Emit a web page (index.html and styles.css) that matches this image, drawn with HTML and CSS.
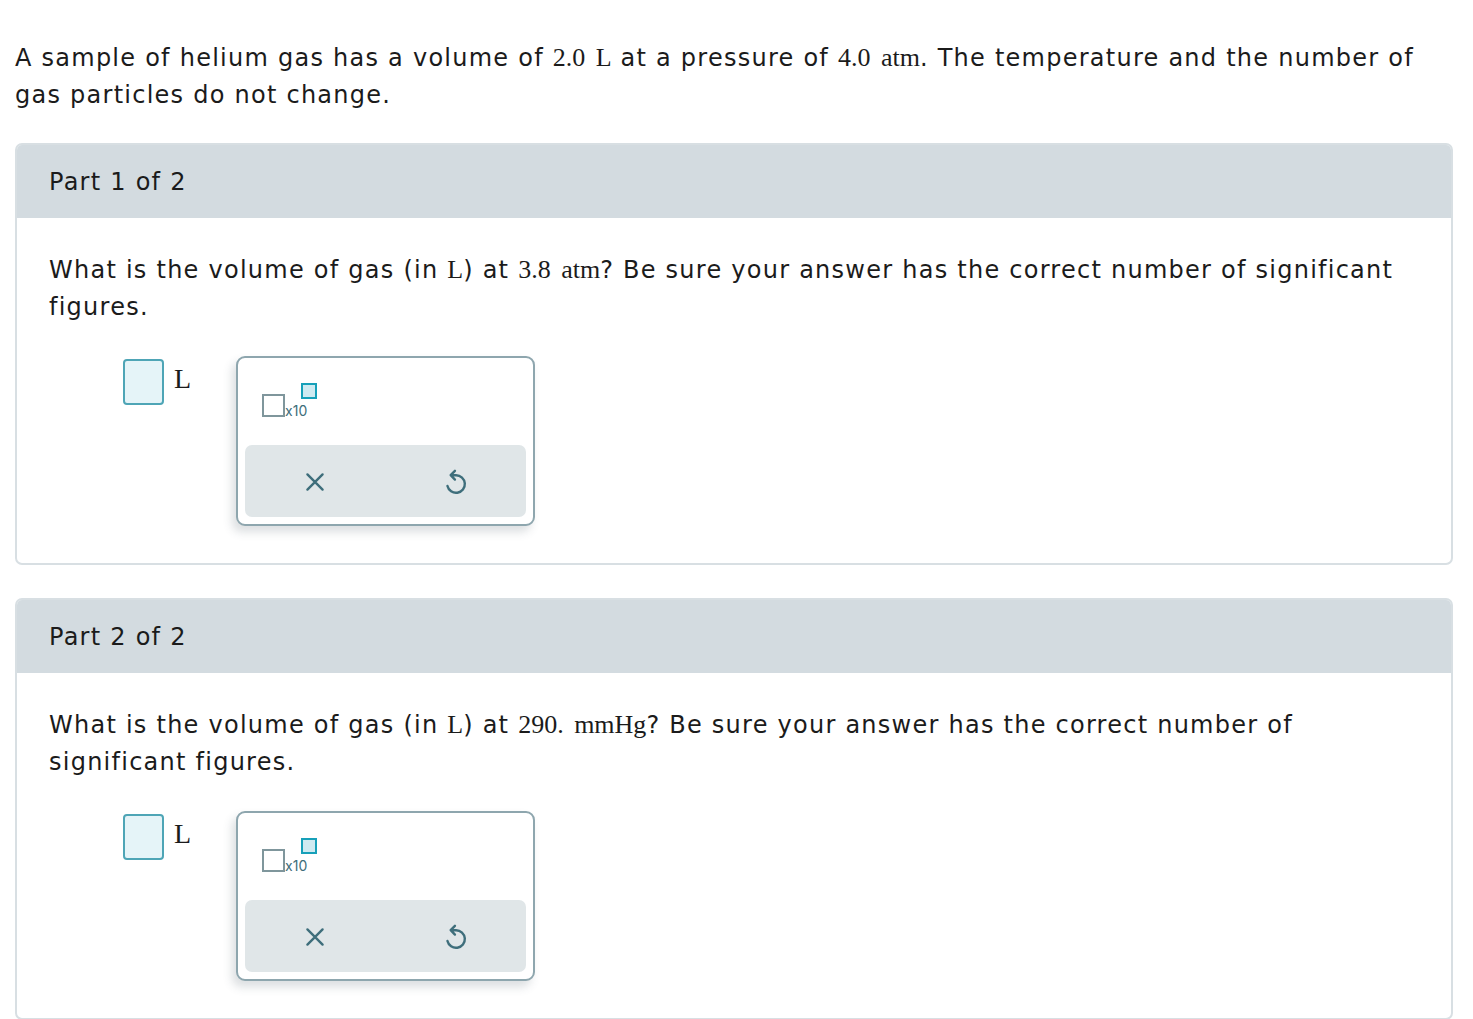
FILE: index.html
```html
<!DOCTYPE html>
<html>
<head>
<meta charset="utf-8">
<link rel="stylesheet" href="styles.css">
</head>
<body>
<div class="page">
  <p class="intro">A sample of helium gas has a volume of <span class="m">2.0&nbsp;L</span> at a pressure of <span class="m">4.0&nbsp;atm</span>. The temperature and the number of gas particles do not change.</p>

  <section class="card">
    <div class="card-head">Part 1 of 2</div>
    <div class="card-body">
      <p class="q">What is the volume of gas (in <span class="m">L</span>) at <span class="m">3.8&nbsp;atm</span>? Be sure your answer has the correct number of significant figures.</p>
      <div class="answer">
        <div class="field"></div>
        <span class="unit">L</span>
        <div class="pad">
          <div class="sci">
            <span class="box-gray"></span><span class="x10">x10</span><span class="box-sup"></span>
          </div>
          <div class="bar">
            <button class="btn" aria-label="clear">
              <svg width="26" height="26" viewBox="0 0 24 24"><path d="M5 5 L19 19 M19 5 L5 19" stroke="#3e6e7b" stroke-width="2.2" stroke-linecap="round" fill="none"/></svg>
            </button>
            <button class="btn" aria-label="undo">
              <svg width="32" height="32" viewBox="0 0 24 24"><path d="M11.2 3.6 L8 6.9 L11.2 10.2 M8.3 6.9 H12 A6.6 6.6 0 1 1 5.6 15" stroke="#3e6e7b" stroke-width="1.8" stroke-linecap="round" stroke-linejoin="round" fill="none"/></svg>
            </button>
          </div>
        </div>
      </div>
    </div>
  </section>

  <section class="card">
    <div class="card-head">Part 2 of 2</div>
    <div class="card-body">
      <p class="q">What is the volume of gas (in <span class="m">L</span>) at <span class="m">290.&nbsp;mmHg</span>? Be sure your answer has the correct number of significant figures.</p>
      <div class="answer">
        <div class="field"></div>
        <span class="unit">L</span>
        <div class="pad">
          <div class="sci">
            <span class="box-gray"></span><span class="x10">x10</span><span class="box-sup"></span>
          </div>
          <div class="bar">
            <button class="btn" aria-label="clear">
              <svg width="26" height="26" viewBox="0 0 24 24"><path d="M5 5 L19 19 M19 5 L5 19" stroke="#3e6e7b" stroke-width="2.2" stroke-linecap="round" fill="none"/></svg>
            </button>
            <button class="btn" aria-label="undo">
              <svg width="32" height="32" viewBox="0 0 24 24"><path d="M11.2 3.6 L8 6.9 L11.2 10.2 M8.3 6.9 H12 A6.6 6.6 0 1 1 5.6 15" stroke="#3e6e7b" stroke-width="1.8" stroke-linecap="round" stroke-linejoin="round" fill="none"/></svg>
            </button>
          </div>
        </div>
      </div>
    </div>
  </section>
</div>
</body>
</html>
```

FILE: styles.css
```css
* { box-sizing: border-box; }
html, body { margin: 0; padding: 0; background: #fff; }
body {
  font-family: "DejaVu Sans", Verdana, sans-serif;
  font-size: 24px;
  letter-spacing: 1.25px;
  color: #1b1b1b;
}
.page {
  padding: 39px 20px 0 15px;
}
.intro {
  margin: 0 0 29px 0;
  line-height: 37px;
}
.m {
  font-family: "Liberation Serif", "Times New Roman", serif;
  font-size: 26px;
  letter-spacing: 0;
  word-spacing: 4px;
}
.card {
  border: 2px solid #d8dfe3;
  border-radius: 7px;
  margin-bottom: 33px;
  overflow: hidden;
}
.card-head {
  background: #d3dbe0;
  height: 73px;
  padding: 1px 32px 0;
  display: flex;
  align-items: center;
}
.card-body {
  padding: 33px 32px 37px;
}
.q {
  margin: 0;
  line-height: 37px;
}
.answer {
  display: flex;
  align-items: flex-start;
  margin-top: 30px;
  padding-left: 74px;
}
.field {
  width: 41px;
  height: 46px;
  margin-top: 3px;
  background: #e5f4f8;
  border: 2px solid #4ea5b6;
  border-radius: 4px;
}
.unit {
  font-family: "Liberation Serif", "Times New Roman", serif;
  font-size: 28px;
  letter-spacing: 0;
  margin-left: 10px;
  margin-top: 8px;
  line-height: 30px;
}
.pad {
  margin-left: 45px;
  width: 299px;
  height: 170px;
  border: 2px solid #8ea6ae;
  border-radius: 9px;
  background: #fff;
  box-shadow: -4px 6px 10px rgba(60, 80, 90, 0.18);
  padding: 0 7px 7px;
  display: flex;
  flex-direction: column;
}
.sci {
  height: 87px;
  display: flex;
  align-items: flex-start;
  padding-left: 17px;
  padding-top: 25px;
}
.box-gray {
  width: 23px;
  height: 23px;
  border: 2.5px solid #7f969c;
  margin-top: 11px;
}
.x10 {
  font-family: "Inter", "DejaVu Sans", sans-serif;
  font-size: 14px;
  letter-spacing: 0;
  color: #3e6e7b;
  margin-top: 19px;
  margin-left: 0;
}
.box-sup {
  width: 16px;
  height: 16px;
  border: 2.5px solid #17a0b9;
  background: #cfeaf1;
  margin-left: -6px;
}
.bar {
  flex: 1;
  background: #e0e6e8;
  border-radius: 7px;
  display: flex;
}
.btn {
  flex: 1;
  background: transparent;
  border: 0;
  padding: 0;
  display: flex;
  align-items: center;
  justify-content: center;
  padding-top: 2px;
}
```
